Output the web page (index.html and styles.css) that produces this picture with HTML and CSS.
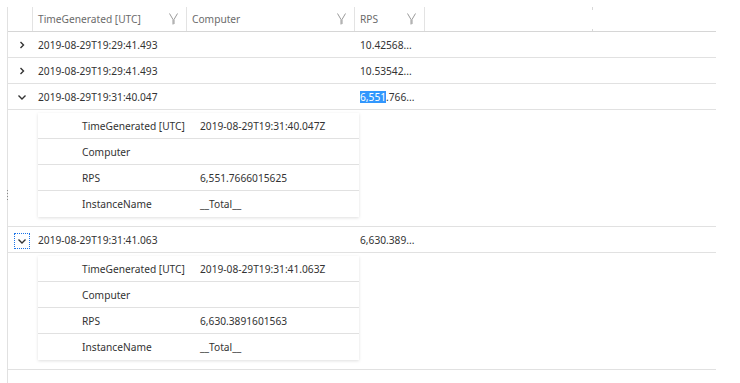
FILE: index.html
```html
<!DOCTYPE html>
<html lang="en">
<head>
  <meta charset="UTF-8" />
  <title>Query results</title>
  <link rel="stylesheet" href="styles.css">
</head>
<body>

  <div class="pane">
    <!-- splitter with grip -->
    <div class="splitter"><span class="grip"></span></div>

    <div class="grid">
      <div class="head">
        <div class="hcell"></div>
        <div class="hcell">
          <span>TimeGenerated [UTC]</span>
          <svg class="filter" width="9" height="12" viewBox="0 0 9 12"><path d="M0.5 0.5 L4 6.5 V11.5 M8.5 0.5 L5 6.5 V11" /></svg>
        </div>
        <div class="hcell">
          <span>Computer</span>
          <svg class="filter" width="9" height="12" viewBox="0 0 9 12"><path d="M0.5 0.5 L4 6.5 V11.5 M8.5 0.5 L5 6.5 V11" /></svg>
        </div>
        <div class="hcell">
          <span>RPS</span>
          <svg class="filter" width="9" height="12" viewBox="0 0 9 12"><path d="M0.5 0.5 L4 6.5 V11.5 M8.5 0.5 L5 6.5 V11" /></svg>
        </div>
        <div class="hcell tick"></div>
        <div></div>
      </div>

      <div class="row">
        <div class="exp"><svg width="8" height="8" viewBox="0 0 8 8"><path d="M2.5 1 L5.5 4 L2.5 7" /></svg></div>
        <div class="cell">2019-08-29T19:29:41.493</div>
        <div class="cell"></div>
        <div class="cell">10.42568...</div>
      </div>

      <div class="row">
        <div class="exp"><svg width="8" height="8" viewBox="0 0 8 8"><path d="M2.5 1 L5.5 4 L2.5 7" /></svg></div>
        <div class="cell">2019-08-29T19:29:41.493</div>
        <div class="cell"></div>
        <div class="cell">10.53542...</div>
      </div>

      <div class="row">
        <div class="exp"><svg width="8" height="8" viewBox="0 0 8 8"><path d="M0.5 2.5 L4 6 L7.5 2.5" /></svg></div>
        <div class="cell">2019-08-29T19:31:40.047</div>
        <div class="cell"></div>
        <div class="cell"><span class="sel">6,551</span>.766...</div>
      </div>

      <div class="details">
        <div class="card">
          <div class="prop"><span>TimeGenerated [UTC]</span><span>2019-08-29T19:31:40.047Z</span></div>
          <div class="prop"><span>Computer</span><span></span></div>
          <div class="prop"><span>RPS</span><span>6,551.7666015625</span></div>
          <div class="prop"><span>InstanceName</span><span>__Total__</span></div>
        </div>
      </div>

      <div class="row">
        <div class="exp"><span class="focus"><svg width="8" height="8" viewBox="0 0 8 8"><path d="M0.5 2.5 L4 6 L7.5 2.5" /></svg></span></div>
        <div class="cell">2019-08-29T19:31:41.063</div>
        <div class="cell"></div>
        <div class="cell">6,630.389...</div>
      </div>

      <div class="details">
        <div class="card">
          <div class="prop"><span>TimeGenerated [UTC]</span><span>2019-08-29T19:31:41.063Z</span></div>
          <div class="prop"><span>Computer</span><span></span></div>
          <div class="prop"><span>RPS</span><span>6,630.3891601563</span></div>
          <div class="prop"><span>InstanceName</span><span>__Total__</span></div>
        </div>
      </div>
    </div>
  </div>

</body>
</html>
```

FILE: styles.css
```css
body {
  margin: 0;
  background: white;
  font-family: "Noto Sans", "Open Sans", sans-serif;
  font-size: 10.2px;
  color: #333;
}

.pane {
  display: flex;
  margin: 7px 0 0 7px;
  height: 376px;
}

.splitter {
  width: 1px;
  background: #e1e1e1;
  display: flex;
  align-items: center;
}

.grip {
  width: 1px;
  height: 11px;
  background: repeating-linear-gradient(#8a8a8a 0 1px, transparent 1px 3px);
}

.grid {
  width: 708px;
}

.head, .row {
  display: grid;
  grid-template-columns: 25px 154px 168px 70px 168px 1fr;
}

.head {
  height: 24px;
  border-bottom: 1px solid #d6d6d6;
  color: #6b6b6b;
}

.hcell {
  display: flex;
  justify-content: space-between;
  align-items: center;
  padding: 0 8px 0 5px;
  border-right: 1px solid #e3e3e3;
}

.hcell.tick {
  border-right: none;
  background:
    linear-gradient(#d8d8d8, #d8d8d8) right top / 1px 3px no-repeat,
    linear-gradient(#d8d8d8, #d8d8d8) right bottom / 1px 2px no-repeat;
}

.filter path {
  fill: none;
  stroke: #9a9a9a;
  stroke-width: 1;
}

.row {
  height: 25px;
  border-bottom: 1px solid #e1e1e1;
  align-items: center;
}

.cell {
  padding-left: 5px;
  white-space: nowrap;
  overflow: hidden;
}

.exp {
  display: flex;
  align-items: center;
  justify-content: center;
  padding-left: 3px;
  height: 100%;
}

.exp svg {
  display: block;
}

.exp path {
  fill: none;
  stroke: #333;
  stroke-width: 1.4;
}

.focus {
  width: 14px;
  height: 14px;
  margin-top: 2px;
  border: 1px dotted #1a73e8;
  display: flex;
  align-items: center;
  justify-content: center;
}

.sel {
  display: inline-block;
  background: #3297fd;
  color: white;
  line-height: 12px;
}

.details {
  padding: 3px 0 9px 30px;
  border-bottom: 1px solid #e1e1e1;
}

.card {
  width: 321px;
  background: white;
  box-shadow: 0 1px 3px rgba(0, 0, 0, 0.13);
}

.prop {
  display: grid;
  grid-template-columns: 118px 1fr;
  align-items: center;
  height: 26px;
  box-sizing: border-box;
  padding-left: 44px;
  white-space: nowrap;
  border-bottom: 1px solid #e1e1e1;
}

.prop:last-child {
  border-bottom: none;
}
```
